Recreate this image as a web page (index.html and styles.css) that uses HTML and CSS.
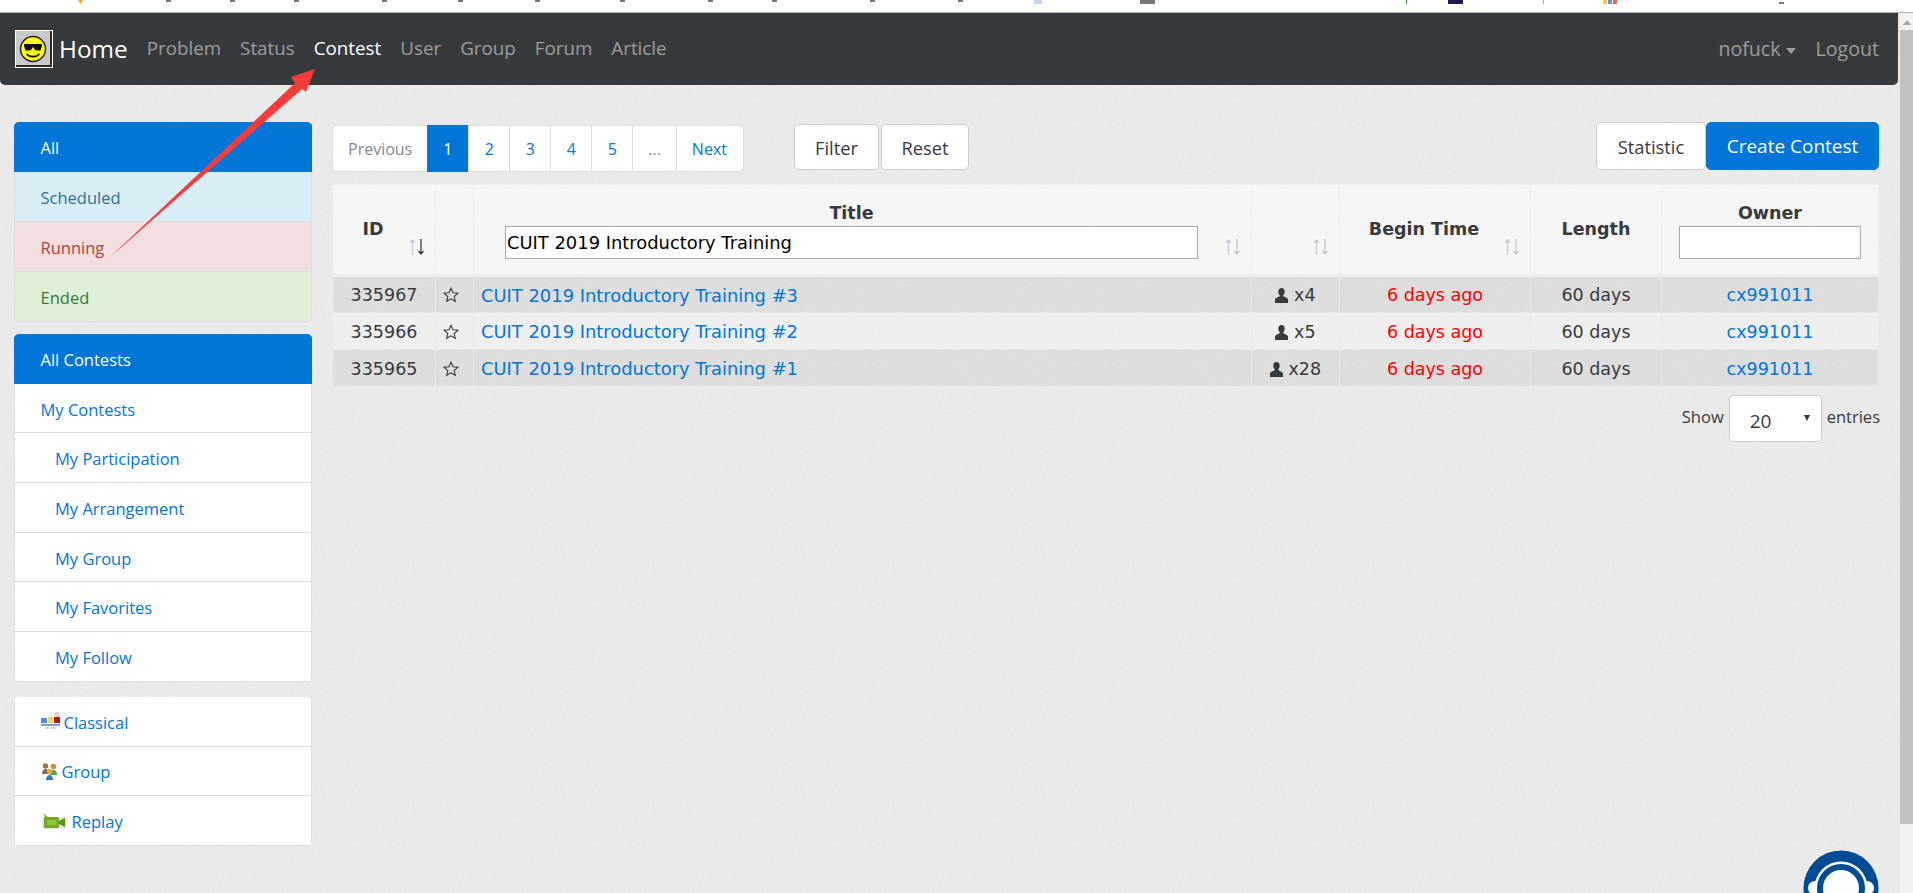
FILE: index.html
```html
<!DOCTYPE html>
<html lang="en">
<head>
    <meta charset="UTF-8">
    <title>Contest</title>
    <link rel="stylesheet" href="styles.css">
</head>
<body>
    <svg class="tab-strip" width="1913" height="12" viewBox="0 0 1913 12">
        <path d="M78 0h5l-2.500 4z" fill="#f5a623"/>
        <g fill="#777">
            <rect x="166" width="5" height="2"/><rect x="230" width="5" height="2"/><rect x="294" width="5" height="2"/>
            <rect x="382" width="5" height="2"/><rect x="458" width="5" height="2"/><rect x="535" width="5" height="2"/>
            <rect x="620" width="5" height="2"/><rect x="708" width="5" height="2"/><rect x="772" width="5" height="2"/>
            <rect x="870" width="5" height="2"/><rect x="958" width="5" height="2"/><rect x="1140" width="15" height="4"/>
            <rect x="1779" y="2" width="5" height="2"/>
        </g>
        <rect x="1034" width="8" height="4" fill="#c5d3f2"/>
        <rect x="1406" width="1" height="4" fill="#3a7d2c"/>
        <rect x="1448" width="15" height="4" fill="#221a4f"/>
        <rect x="1543" width="1" height="4" fill="#e8a13c"/>
        <rect x="1603" width="4" height="4" fill="#f2c14e"/><rect x="1608" width="4" height="4" fill="#5b8def"/><rect x="1613" width="4" height="4" fill="#e66a5b"/>
    </svg>

    <div class="viewport">
        <div class="page">
            <nav class="navbar">
                <a class="brand" href="#">
                    <svg class="logo" width="38" height="38" viewBox="0 0 38 38">
                        <rect width="38" height="38" fill="#fff"/>
                        <rect x="1" y="1" width="36" height="36" fill="#2b2b2b"/>
                        <rect x="1" y="1" width="34" height="34" fill="#c8c8c8"/>
                        <circle cx="18" cy="19" r="12.500" fill="#ffff00" stroke="#222" stroke-width="1.500"/>
                        <path d="M9 14h18v2l-1.500 4.500h-5L18 17l-2.500 3.500h-5L9 16z" fill="#111"/>
                        <path d="M11.500 24c3 3.500 10 3.500 13 0" fill="none" stroke="#111" stroke-width="1.600"/>
                    </svg>
                    <span>Home</span>
                </a>
                <ul class="nav-links">
                    <li><a href="#">Problem</a></li>
                    <li><a href="#">Status</a></li>
                    <li><a class="active" href="#">Contest</a></li>
                    <li><a href="#">User</a></li>
                    <li><a href="#">Group</a></li>
                    <li><a href="#">Forum</a></li>
                    <li><a href="#">Article</a></li>
                </ul>
                <ul class="nav-links nav-right">
                    <li><a href="#">nofuck<i class="caret"></i></a></li>
                    <li><a href="#">Logout</a></li>
                </ul>
            </nav>

            <div class="content">
                <aside class="sidebar">
                    <div class="list-group status-group">
                        <a class="list-item selected" href="#">All</a>
                        <a class="list-item info" href="#">Scheduled</a>
                        <a class="list-item danger" href="#">Running</a>
                        <a class="list-item success" href="#">Ended</a>
                    </div>
                    <div class="list-group">
                        <a class="list-item selected" href="#">All Contests</a>
                        <a class="list-item" href="#">My Contests</a>
                        <a class="list-item sub" href="#">My Participation</a>
                        <a class="list-item sub" href="#">My Arrangement</a>
                        <a class="list-item sub" href="#">My Group</a>
                        <a class="list-item sub" href="#">My Favorites</a>
                        <a class="list-item sub" href="#">My Follow</a>
                    </div>
                    <div class="list-group last">
                        <a class="list-item icon-item" href="#">
                            <svg width="19" height="18" viewBox="0 0 19 18">
                                <rect x="0" y="6" width="6" height="5" fill="#4d8df0"/>
                                <rect x="7" y="5" width="5" height="6" fill="#f7d84a"/>
                                <rect x="13" y="5" width="6" height="6" fill="#b8161c"/>
                                <circle cx="16" cy="2.500" r="2" fill="#f6d5d5" stroke="#d88" stroke-width=".6"/>
                                <rect x="0" y="12" width="19" height="2" fill="#8f9ad0"/>
                                <rect x="4" y="15" width="4" height="2" fill="#bcd7f2"/>
                                <rect x="10" y="15" width="5" height="2" fill="#f2c7c0"/>
                            </svg>
                            <span>Classical</span>
                        </a>
                        <a class="list-item icon-item" href="#">
                            <svg width="17" height="18" viewBox="0 0 17 18">
                                <circle cx="4.500" cy="4" r="2.800" fill="#a8743c"/>
                                <path d="M1 12c0-3.500 2-5 3.500-5S8 8.500 8 12z" fill="#7a6a55"/>
                                <circle cx="12.500" cy="4.500" r="2.800" fill="#c68b48"/>
                                <path d="M9 13c0-3.500 2-5 3.500-5s3.500 1.500 3.500 5z" fill="#4aa356"/>
                                <circle cx="8.500" cy="9.500" r="2.800" fill="#e6a92f"/>
                                <path d="M5 18c0-3.500 2-5 3.500-5s3.500 1.500 3.500 5z" fill="#2f77c8"/>
                            </svg>
                            <span>Group</span>
                        </a>
                        <a class="list-item icon-item" href="#">
                            <svg width="27" height="18" viewBox="0 0 27 18">
                                <rect x="1" y="5" width="25" height="12" rx="3" fill="#e4e4e4"/>
                                <path d="M2 1l6 5-3 1z" fill="#7bb32e"/>
                                <rect x="3" y="5" width="15" height="11" rx="1.500" fill="#75a823"/>
                                <rect x="6" y="8" width="9" height="5" fill="#96c63f"/>
                                <path d="M18 9l6-3v9l-6-3z" fill="#5f9120"/>
                            </svg>
                            <span>Replay</span>
                        </a>
                    </div>
                </aside>

                <main class="main">
                    <div class="toolbar">
                        <ul class="pagination">
                            <li class="disabled"><a href="#">Previous</a></li>
                            <li class="current"><a href="#">1</a></li>
                            <li><a href="#">2</a></li>
                            <li><a href="#">3</a></li>
                            <li><a href="#">4</a></li>
                            <li><a href="#">5</a></li>
                            <li class="disabled"><a href="#">...</a></li>
                            <li><a href="#">Next</a></li>
                        </ul>
                        <div class="btn-pair filter-pair">
                            <button class="btn btn-filter">Filter</button>
                            <button class="btn btn-reset">Reset</button>
                        </div>
                        <div class="btn-pair action-pair">
                            <button class="btn btn-statistic">Statistic</button>
                            <button class="btn btn-primary">Create Contest</button>
                        </div>
                    </div>

                    <table class="contest-table">
                        <colgroup>
                            <col class="col-id"><col class="col-star"><col class="col-title"><col class="col-count">
                            <col class="col-begin"><col class="col-length"><col class="col-owner">
                        </colgroup>
                        <thead>
                            <tr>
                                <th class="th-id">ID<svg class="sort sort-desc" width="16" height="16" viewBox="0 0 16 16"><path class="up" d="M3.500 16V1M1 4l2.500-3L6 4"/><path class="down" d="M12 0v15M9.500 12l2.500 3 2.500-3"/></svg></th>
                                <th></th>
                                <th class="th-title">
                                    <div>Title</div>
                                    <input class="th-input" type="text" value="CUIT 2019 Introductory Training">
                                    <svg class="sort" width="16" height="16" viewBox="0 0 16 16"><path class="up" d="M3.500 16V1M1 4l2.500-3L6 4"/><path class="down" d="M12 0v15M9.500 12l2.500 3 2.500-3"/></svg>
                                </th>
                                <th><svg class="sort" width="16" height="16" viewBox="0 0 16 16"><path class="up" d="M3.500 16V1M1 4l2.500-3L6 4"/><path class="down" d="M12 0v15M9.500 12l2.500 3 2.500-3"/></svg></th>
                                <th class="th-begin">Begin Time<svg class="sort" width="16" height="16" viewBox="0 0 16 16"><path class="up" d="M3.500 16V1M1 4l2.500-3L6 4"/><path class="down" d="M12 0v15M9.500 12l2.500 3 2.500-3"/></svg></th>
                                <th>Length</th>
                                <th class="th-owner">
                                    <div>Owner</div>
                                    <input class="th-input" type="text">
                                </th>
                            </tr>
                        </thead>
                        <tbody>
                            <tr>
                                <td>335967</td>
                                <td><svg class="star" width="16" height="16" viewBox="0 0 16 16"><path d="M8 1.300l2 4.500 4.900.5-3.700 3.200 1.100 4.800L8 11.800l-4.300 2.500 1.100-4.800L1.100 6.300 6 5.800z"/></svg></td>
                                <td class="td-title"><a href="#">CUIT 2019 Introductory Training #3</a></td>
                                <td><svg class="person" width="13" height="15" viewBox="0 0 13 15"><path d="M6.500 0c2 0 3.200 1.500 3.200 3.700 0 1.500-.6 2.800-1.400 3.500v1l3.200 1.500c1 .5 1.500 1.100 1.500 2.300V15H0v-3c0-1.200.5-1.800 1.500-2.300l3.200-1.500v-1c-.8-.7-1.400-2-1.400-3.500C3.300 1.500 4.500 0 6.500 0z"/></svg> x4</td>
                                <td class="td-time">6 days ago</td>
                                <td>60 days</td>
                                <td><a href="#">cx991011</a></td>
                            </tr>
                            <tr>
                                <td>335966</td>
                                <td><svg class="star" width="16" height="16" viewBox="0 0 16 16"><path d="M8 1.300l2 4.500 4.900.5-3.700 3.200 1.100 4.800L8 11.800l-4.300 2.500 1.100-4.800L1.100 6.300 6 5.800z"/></svg></td>
                                <td class="td-title"><a href="#">CUIT 2019 Introductory Training #2</a></td>
                                <td><svg class="person" width="13" height="15" viewBox="0 0 13 15"><path d="M6.500 0c2 0 3.200 1.500 3.200 3.700 0 1.500-.6 2.800-1.400 3.500v1l3.200 1.500c1 .5 1.500 1.100 1.500 2.300V15H0v-3c0-1.200.5-1.800 1.500-2.300l3.200-1.500v-1c-.8-.7-1.400-2-1.400-3.500C3.300 1.500 4.500 0 6.500 0z"/></svg> x5</td>
                                <td class="td-time">6 days ago</td>
                                <td>60 days</td>
                                <td><a href="#">cx991011</a></td>
                            </tr>
                            <tr>
                                <td>335965</td>
                                <td><svg class="star" width="16" height="16" viewBox="0 0 16 16"><path d="M8 1.300l2 4.500 4.900.5-3.700 3.200 1.100 4.800L8 11.800l-4.300 2.500 1.100-4.800L1.100 6.300 6 5.800z"/></svg></td>
                                <td class="td-title"><a href="#">CUIT 2019 Introductory Training #1</a></td>
                                <td><svg class="person" width="13" height="15" viewBox="0 0 13 15"><path d="M6.500 0c2 0 3.200 1.500 3.200 3.700 0 1.500-.6 2.800-1.400 3.500v1l3.200 1.500c1 .5 1.500 1.100 1.500 2.300V15H0v-3c0-1.200.5-1.800 1.500-2.300l3.200-1.500v-1c-.8-.7-1.400-2-1.400-3.500C3.300 1.500 4.500 0 6.500 0z"/></svg> x28</td>
                                <td class="td-time">6 days ago</td>
                                <td>60 days</td>
                                <td><a href="#">cx991011</a></td>
                            </tr>
                        </tbody>
                    </table>

                    <div class="entries">
                        <span>Show</span>
                        <div class="select-box">
                            <select>
                                <option>20</option>
                            </select>
                        </div>
                        <span>entries</span>
                    </div>
                </main>
            </div>
        </div>

        <div class="scrollbar">
            <i class="scroll-up"></i>
            <div class="scroll-thumb"></div>
        </div>

        <!-- red annotation arrow drawn on the screenshot -->
        <svg class="annotation" width="230" height="210" viewBox="0 0 230 210">
            <path d="M220 0L196 8 200 14 14 189 207 20 211 23z" fill="#f63b3b"/>
        </svg>

        <svg class="help-widget" width="76" height="76" viewBox="0 0 76 76">
            <circle cx="38" cy="38" r="37.500" fill="#004b93"/>
            <circle cx="12" cy="38" r="7" fill="#fff"/>
            <circle cx="64" cy="38" r="7" fill="#fff"/>
            <circle cx="38" cy="38" r="26.500" fill="#fff"/>
            <circle cx="38" cy="38" r="24" fill="#004b93"/>
            <circle cx="38" cy="38" r="18" fill="#fff"/>
        </svg>
    </div>
</body>
</html>
```

FILE: styles.css
```css
* {
    box-sizing: border-box;
}
html, body {
    margin: 0;
    height: 100%;
    overflow: hidden;
}
body {
    background-color: #fff;
    color: #373a3c;
    font-family: "Open Sans", "Liberation Sans", sans-serif;
    font-size: 16.500px;
}
a {
    color: #0275d8;
    text-decoration: none;
}
ul {
    list-style: none;
    margin: 0;
    padding: 0;
}
.tab-strip {
    display: block;
}
.viewport {
    position: relative;
    display: flex;
    height: 881px;
    border-top: 1px solid #b5b5b5;
    overflow: hidden;
    background-color: #e6e6e6;
    background-image: url("data:image/svg+xml,%3Csvg xmlns='http://www.w3.org/2000/svg' width='240' height='240'%3E%3Cfilter id='n'%3E%3CfeTurbulence type='fractalNoise' baseFrequency='.7' numOctaves='2' stitchTiles='stitch'/%3E%3CfeColorMatrix values='0 0 0 0 1 0 0 0 0 1 0 0 0 0 1 0 0 0 .5 -.12'/%3E%3C/filter%3E%3Crect width='240' height='240' filter='url(%23n)'/%3E%3C/svg%3E");
}
.page {
    flex: 1;
    min-width: 0;
    padding-right: 2px;
}

/* navbar */
.navbar {
    display: flex;
    align-items: center;
    height: 72px;
    padding: 0 19px 2px 15px;
    background-color: #373a3c;
    border-radius: 0 0 5px 5px;
    font-size: 18.800px;
}
.brand {
    display: flex;
    align-items: center;
    color: #fff;
    font-size: 24.300px;
    margin-right: 19px;
}
.logo {
    margin: 2px 6px 0 0;
}
.nav-links {
    display: flex;
    gap: 19px;
}
.nav-links a {
    color: rgba(255, 255, 255, 0.5);
}
.nav-links a.active {
    color: #fff;
}
.nav-right {
    margin-left: auto;
    gap: 20px;
    font-size: 19.600px;
}
.caret {
    display: inline-block;
    margin-left: 5px;
    vertical-align: 2px;
    border-top: 6px solid rgba(255, 255, 255, 0.5);
    border-left: 5.500px solid transparent;
    border-right: 5.500px solid transparent;
}

/* sidebar */
.content {
    display: flex;
    gap: 19px;
    padding: 37px 19px 0 14px;
}
.sidebar {
    flex: 0 0 299px;
    padding-right: 1px;
}
.list-group {
    display: flex;
    flex-direction: column;
    margin-bottom: 12px;
    border-radius: 5px;
    overflow: hidden;
}
.list-group.last {
    margin-top: 15px;
}
.list-item {
    display: flex;
    align-items: center;
    height: 49.700px;
    padding: 2px 0 0 25.500px;
    background-color: #fff;
    border: 1px solid #ddd;
    border-top: 0;
    white-space: nowrap;
}
.status-group .list-item {
    height: 50px;
}
.list-item.selected {
    background-color: #0275d8;
    border-color: #0275d8;
    color: #fff;
}
.list-item.info {
    background-color: #d9edf7;
    color: #31708f;
}
.list-item.danger {
    background-color: #f2dede;
    color: #a94442;
}
.list-item.success {
    background-color: #dff0d8;
    color: #3c763d;
}
.list-item.sub {
    padding-left: 40px;
}
.icon-item svg {
    margin: -2px 4px 0 0;
}

/* toolbar */
.toolbar {
    display: flex;
    align-items: flex-start;
    height: 62px;
    font-size: 16px;
}
.pagination {
    display: flex;
    height: 47px;
    margin-top: 3px;
    background-color: #fff;
    border: 1px solid #ddd;
    border-radius: 5px;
}
.pagination li {
    display: flex;
    align-items: center;
    justify-content: center;
    min-width: 41px;
    padding: 1px 15px 0;
    border-left: 1px solid #ddd;
}
.pagination li:first-child {
    border-left: 0;
}
.pagination li:last-child {
    padding-right: 16px;
}
.pagination .disabled a {
    color: #818a91;
}
.pagination .current {
    background-color: #0275d8;
    border-left: 0;
    height: 47px;
    margin-top: -1px;
}
.pagination .current a {
    color: #fff;
}
.btn-pair {
    display: flex;
}
.filter-pair {
    margin: 2px 0 0 50px;
    gap: 2px;
}
.action-pair {
    margin-left: auto;
}
.btn {
    height: 46px;
    padding: 0;
    background-color: #fff;
    color: #373a3c;
    border: 1px solid #ccc;
    border-radius: 5px;
    font-family: inherit;
    font-size: 18.300px;
}
.btn-filter {
    width: 85px;
}
.btn-reset {
    width: 88px;
}
.btn-statistic {
    width: 110px;
    height: 48px;
}
.btn-primary {
    width: 173px;
    height: 48px;
    background-color: #0275d8;
    border-color: #0275d8;
    color: #fff;
    font-size: 19px;
}

/* table */
.contest-table {
    width: 1546px;
    table-layout: fixed;
    border-collapse: collapse;
    font-family: "DejaVu Sans", Verdana, sans-serif;
    font-size: 17.500px;
}
.col-id { width: 103px; }
.col-star { width: 38px; }
.col-title { width: 778px; }
.col-count { width: 88px; }
.col-begin { width: 191px; }
.col-length { width: 131px; }
.col-owner { width: 217px; }
.contest-table th {
    position: relative;
    height: 91px;
    padding: 0;
    background-color: rgba(255, 255, 255, 0.55);
    border: 1px solid #eeeeee;
    border-bottom: 3px solid #eceeef;
    font-weight: bold;
    line-height: 25px;
    text-align: center;
}
.contest-table .th-id,
.contest-table .th-begin {
    padding-right: 22px;
}
.contest-table .th-title {
    padding: 16px 53px 0 31px;
    vertical-align: top;
}
.contest-table .th-owner {
    padding: 16px 17px 0;
    vertical-align: top;
}
.th-input {
    display: block;
    width: 100%;
    height: 33px;
    padding: 0 1px;
    background-color: #fff;
    border: 1px solid #a9a9a9;
    color: #000;
    font-family: "DejaVu Sans", Verdana, sans-serif;
    font-size: 17.900px;
}
.contest-table td {
    height: 37px;
    padding: 1px 0 0;
    border: 1px solid #e9e9e9;
    text-align: center;
    white-space: nowrap;
}
.contest-table tbody tr:nth-child(odd) {
    background-color: rgba(0, 0, 0, 0.05);
}
.contest-table tbody tr:nth-child(even) {
    background-color: rgba(255, 255, 255, 0.25);
}
.contest-table .td-title {
    padding-left: 7px;
    font-size: 17.900px;
    text-align: left;
}
.td-time {
    color: #ff0000;
}
.star {
    display: block;
    margin-left: 7px;
    fill: none;
    stroke: #3a3a3a;
    stroke-width: 1.100;
}
.person {
    vertical-align: -2px;
    fill: #373a3c;
}

/* sort arrows, same place datatables puts them */
.sort {
    position: absolute;
    right: 10px;
    bottom: 19px;
    fill: none;
    stroke-width: 1.200;
}
.sort .up,
.sort .down {
    stroke: #c4c8cc;
}
.sort-desc .down {
    stroke: #333;
}

/* entries select */
.entries {
    display: flex;
    justify-content: flex-end;
    align-items: flex-start;
    gap: 5px;
    margin-top: 8px;
    margin-right: -1px;
    line-height: 44px;
}
.select-box {
    position: relative;
    width: 93px;
    height: 47px;
}
.select-box::after {
    content: "";
    position: absolute;
    right: 12px;
    top: 20px;
    border-top: 6px solid #333;
    border-left: 3px solid transparent;
    border-right: 3px solid transparent;
}
.select-box select {
    width: 100%;
    height: 100%;
    padding: 4px 0 0 20px;
    appearance: none;
    background-color: #fff;
    border: 1px solid #ccc;
    border-radius: 5px;
    color: #373a3c;
    font-family: inherit;
    font-size: 19px;
}

/* scrollbar */
.scrollbar {
    flex: 0 0 13px;
    background-color: #f1f1f1;
}
.scroll-up {
    display: block;
    width: 0;
    margin: 7px auto 0;
    border-bottom: 5px solid #a3a3a3;
    border-left: 4px solid transparent;
    border-right: 4px solid transparent;
}
.scroll-thumb {
    height: 794px;
    margin-top: 5px;
    background-color: #c1c1c1;
}

/* overlays */
.annotation {
    position: absolute;
    left: 95px;
    top: 56px;
}
.help-widget {
    position: absolute;
    left: 1803px;
    top: 837px;
}
```
